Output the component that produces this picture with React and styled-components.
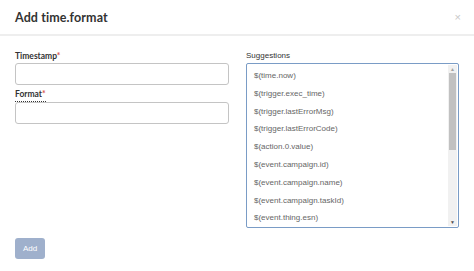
import styled, { createGlobalStyle } from "styled-components";

const GlobalStyle = createGlobalStyle`
  html, body {
    margin: 0;
    padding: 0;
    background: #fff;
  }
  body {
    font-family: "Liberation Sans", Arial, sans-serif;
  }
`;

const Modal = styled.div`
  width: 474px;
  height: 271px;
  display: flex;
  flex-direction: column;
  background: #fff;
`;

const Header = styled.div`
  height: 36px;
  display: flex;
  align-items: center;
  justify-content: space-between;
  padding: 0 13px 0 15px;
  border-bottom: 2px solid #eeeeee;
  box-sizing: border-box;
`;

const Title = styled.h1`
  margin: 0;
  font-family: Lato, sans-serif;
  font-size: 12.5px;
  font-weight: 700;
  color: #333;
  letter-spacing: 0.1px;
`;

const Close = styled.span`
  font-size: 11px;
  color: #c8c8c8;
  font-family: "Liberation Sans", sans-serif;
`;

const Body = styled.div`
  display: flex;
  gap: 17px;
  padding: 14px 15px 0 15px;
`;

const Column = styled.div`
  display: flex;
  flex-direction: column;
  width: ${(p) => p.w}px;
`;

const Label = styled.label`
  font-family: Lato, sans-serif;
  font-size: 8.5px;
  font-weight: 700;
  color: #333;
  height: 13px;
  line-height: 13px;
  align-self: flex-start;
  border-bottom: ${(p) => (p.dotted ? "1px dotted #333" : "none")};
  span {
    color: #d9534f;
  }
`;

const Input = styled.input`
  height: 22px;
  box-sizing: border-box;
  border: 1px solid #c4c4c4;
  border-radius: 3px;
  margin: 0 0 ${(p) => p.mb || 0}px 0;
  outline: none;
  background: #fff;
`;

const PlainLabel = styled.div`
  font-family: "Liberation Sans", Arial, sans-serif;
  font-size: 8px;
  color: #333;
  height: 13px;
  line-height: 12px;
`;

const ListBox = styled.div`
  height: 165px;
  box-sizing: border-box;
  border: 1px solid #7a9cc6;
  border-radius: 2px;
  display: flex;
  overflow: hidden;
`;

const Items = styled.ul`
  list-style: none;
  margin: 0;
  padding: 3px 0 0 0;
  flex: 1;
`;

const Item = styled.li`
  font-family: "Liberation Sans", Arial, sans-serif;
  font-size: 8px;
  color: #666;
  height: 17.8px;
  line-height: 17.8px;
  padding-left: 7px;
  white-space: nowrap;
`;

const Scrollbar = styled.div`
  width: 9px;
  display: flex;
  flex-direction: column;
  background: #f1f1f1;
  margin: 1px 1px 1px 0;
`;

const Arrow = styled.div`
  height: 8px;
  display: flex;
  align-items: center;
  justify-content: center;
  color: ${(p) => p.color};
  font-size: 5px;
  line-height: 1;
`;

const Thumb = styled.div`
  height: 77px;
  background: #c1c1c1;
  margin: 0 1px;
`;

const Footer = styled.div`
  padding: 9px 15px 0 15px;
`;

const Button = styled.button`
  width: 30px;
  height: 21px;
  border: none;
  border-radius: 3px;
  background: #9fb0cc;
  color: #fff;
  font-family: "Liberation Sans", Arial, sans-serif;
  font-size: 8px;
  padding: 0;
`;

const suggestions = [
  "$(time.now)",
  "$(trigger.exec_time)",
  "$(trigger.lastErrorMsg)",
  "$(trigger.lastErrorCode)",
  "$(action.0.value)",
  "$(event.campaign.id)",
  "$(event.campaign.name)",
  "$(event.campaign.taskId)",
  "$(event.thing.esn)",
];

export default function App() {
  return (
    <>
      <GlobalStyle />
      <Modal>
        <Header>
          <Title>Add time.format</Title>
          <Close>×</Close>
        </Header>
        <Body>
          <Column w={214}>
            <Label>
              Timestamp<span>*</span>
            </Label>
            <Input mb={3} />
            <Label dotted>
              Format<span>*</span>
            </Label>
            <Input />
          </Column>
          <Column w={213}>
            <PlainLabel>Suggestions</PlainLabel>
            <ListBox>
              <Items>
                {suggestions.map((s) => (
                  <Item key={s}>{s}</Item>
                ))}
              </Items>
              <Scrollbar>
                <Arrow color="#a3a3a3">▲</Arrow>
                <Thumb />
                <div style={{ flex: 1 }} />
                <Arrow color="#505050">▼</Arrow>
              </Scrollbar>
            </ListBox>
          </Column>
        </Body>
        <Footer>
          <Button>Add</Button>
        </Footer>
      </Modal>
    </>
  );
}
